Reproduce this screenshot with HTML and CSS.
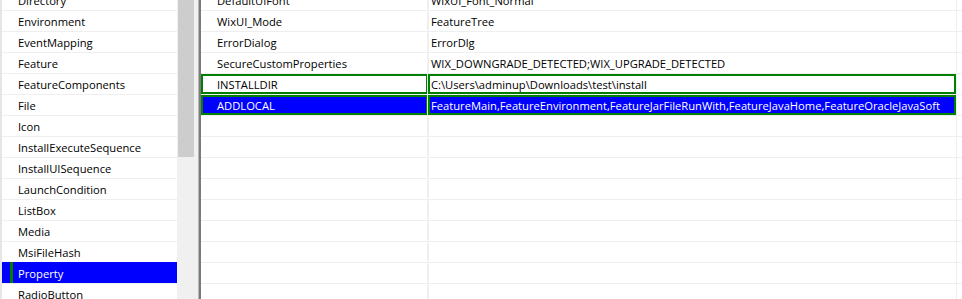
FILE: index.html
```html
<!DOCTYPE html>
<html>
<head>
<meta charset="utf-8">
<link rel="stylesheet" href="styles.css">
</head>
<body>
<div class="app">
  <div class="tables">
    <ul class="list">
      <li class="item">Directory</li>
      <li class="item">Environment</li>
      <li class="item">EventMapping</li>
      <li class="item">Feature</li>
      <li class="item">FeatureComponents</li>
      <li class="item">File</li>
      <li class="item">Icon</li>
      <li class="item">InstallExecuteSequence</li>
      <li class="item">InstallUISequence</li>
      <li class="item">LaunchCondition</li>
      <li class="item">ListBox</li>
      <li class="item">Media</li>
      <li class="item">MsiFileHash</li>
      <li class="item item-selected">Property</li>
      <li class="item">RadioButton</li>
    </ul>
    <div class="scrollbar"><div class="thumb"></div></div>
  </div>
  <div class="splitter"></div>
  <div class="grid">
    <div class="row"><div class="cell name">DefaultUIFont</div><div class="cell value">WixUI_Font_Normal</div><div class="cell rest"></div></div>
    <div class="row"><div class="cell name">WixUI_Mode</div><div class="cell value">FeatureTree</div><div class="cell rest"></div></div>
    <div class="row"><div class="cell name">ErrorDialog</div><div class="cell value">ErrorDlg</div><div class="cell rest"></div></div>
    <div class="row"><div class="cell name">SecureCustomProperties</div><div class="cell value">WIX_DOWNGRADE_DETECTED;WIX_UPGRADE_DETECTED</div><div class="cell rest"></div></div>
    <div class="row row-marked"><div class="cell name">INSTALLDIR</div><div class="cell value">C:\Users\adminup\Downloads\test\install</div><div class="cell rest"></div></div>
    <div class="row row-marked row-selected"><div class="cell name">ADDLOCAL</div><div class="cell value">FeatureMain,FeatureEnvironment,FeatureJarFileRunWith,FeatureJavaHome,FeatureOracleJavaSoft</div><div class="cell rest"></div></div>
    <div class="row"><div class="cell name"></div><div class="cell value"></div><div class="cell rest"></div></div>
    <div class="row"><div class="cell name"></div><div class="cell value"></div><div class="cell rest"></div></div>
    <div class="row"><div class="cell name"></div><div class="cell value"></div><div class="cell rest"></div></div>
    <div class="row"><div class="cell name"></div><div class="cell value"></div><div class="cell rest"></div></div>
    <div class="row"><div class="cell name"></div><div class="cell value"></div><div class="cell rest"></div></div>
    <div class="row"><div class="cell name"></div><div class="cell value"></div><div class="cell rest"></div></div>
    <div class="row"><div class="cell name"></div><div class="cell value"></div><div class="cell rest"></div></div>
    <div class="row"><div class="cell name"></div><div class="cell value"></div><div class="cell rest"></div></div>
    <div class="row"><div class="cell name"></div><div class="cell value"></div><div class="cell rest"></div></div>
  </div>
</div>
</body>
</html>
```
FILE: styles.css
```css
* { box-sizing: border-box; }
html, body { margin: 0; padding: 0; background: #fff; }
body {
  font-family: "Open Sans", "Noto Sans", sans-serif;
  font-size: 11.2px;
  color: #000;
  overflow: hidden;
}
.app {
  display: flex;
  height: 299px;
  width: 962px;
  overflow: hidden;
}
.tables {
  display: flex;
  flex: 0 0 195px;
  border-left: 2px solid #e6e6e6;
  height: 299px;
  overflow: hidden;
}
.list {
  list-style: none;
  margin: -11px 0 0 0;
  padding: 0;
  width: 175px;
  flex: 0 0 175px;
}
.item {
  height: 21px;
  line-height: 22px;
  border-top: 1px solid #efefef;
  padding-left: 16px;
  white-space: nowrap;
  position: relative;
}
.item-selected {
  background: #0000ff;
  border-top-color: #0000ff;
  color: #fff;
}
.item-selected::before {
  content: "";
  position: absolute;
  left: 8px;
  top: -1px;
  width: 3px;
  height: 21px;
  background: #008000;
}
.scrollbar {
  flex: 0 0 18px;
  background: #f0f0f0;
  padding-left: 1px;
  padding-right: 1px;
}
.thumb {
  height: 157px;
  background: #cdcdcd;
}
.splitter {
  flex: 0 0 6px;
  background: #f0f0f0;
  border-right: 2px solid #7a7a7a;
  box-shadow: inset -1px 0 0 #b8b8b8;
}
.grid {
  flex: 1 1 auto;
  display: flex;
  flex-direction: column;
  margin-top: -11px;
}
.row {
  display: flex;
  height: 21px;
  flex: 0 0 21px;
  border-top: 1px solid #efefef;
}
.cell {
  height: 20px;
  line-height: 18px;
  border: 2px solid transparent;
  white-space: nowrap;
  overflow: hidden;
}
.name {
  flex: 0 0 227px;
  padding-left: 14px;
}
.value {
  flex: 0 0 528px;
  padding-left: 2px;
  border-left: 1px solid #efefef;
  box-shadow: -1px 0 0 #efefef;
}
.rest {
  flex: 1 1 auto;
  border: 0;
  border-left: 1px solid #efefef;
}
.row-marked .name,
.row-marked .value {
  border-color: #008000;
}
.row-marked .value {
  border-left: 2px solid #008000;
  padding-left: 1px;
}
.row-selected .name,
.row-selected .value {
  background: #0000ff;
  color: #fff;
}
```
